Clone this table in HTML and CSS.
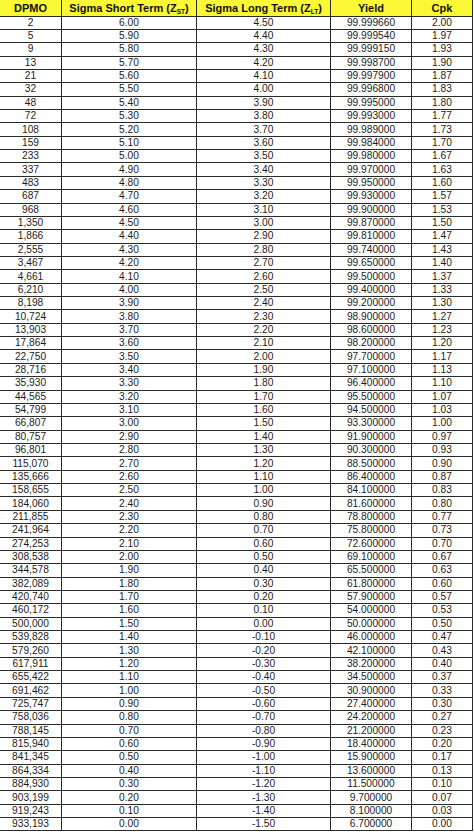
FILE: index.html
```html
<!DOCTYPE html>
<html>
<head>
<meta charset="utf-8">
<link rel="stylesheet" href="styles.css">
</head>
<body>
<table class="sigma">
<colgroup><col class="c1"><col class="c2"><col class="c3"><col class="c4"><col class="c5"></colgroup>
<thead>
<tr class="head"><th>DPMO</th><th>Sigma Short Term (Z<sub>ST</sub>)</th><th>Sigma Long Term (Z<sub>LT</sub>)</th><th>Yield</th><th>Cpk</th></tr>
</thead>
<tbody>
<tr><td>2</td><td>6.00</td><td>4.50</td><td>99.999660</td><td>2.00</td></tr>
<tr><td>5</td><td>5.90</td><td>4.40</td><td>99.999540</td><td>1.97</td></tr>
<tr><td>9</td><td>5.80</td><td>4.30</td><td>99.999150</td><td>1.93</td></tr>
<tr><td>13</td><td>5.70</td><td>4.20</td><td>99.998700</td><td>1.90</td></tr>
<tr><td>21</td><td>5.60</td><td>4.10</td><td>99.997900</td><td>1.87</td></tr>
<tr><td>32</td><td>5.50</td><td>4.00</td><td>99.996800</td><td>1.83</td></tr>
<tr><td>48</td><td>5.40</td><td>3.90</td><td>99.995000</td><td>1.80</td></tr>
<tr><td>72</td><td>5.30</td><td>3.80</td><td>99.993000</td><td>1.77</td></tr>
<tr><td>108</td><td>5.20</td><td>3.70</td><td>99.989000</td><td>1.73</td></tr>
<tr><td>159</td><td>5.10</td><td>3.60</td><td>99.984000</td><td>1.70</td></tr>
<tr><td>233</td><td>5.00</td><td>3.50</td><td>99.980000</td><td>1.67</td></tr>
<tr><td>337</td><td>4.90</td><td>3.40</td><td>99.970000</td><td>1.63</td></tr>
<tr><td>483</td><td>4.80</td><td>3.30</td><td>99.950000</td><td>1.60</td></tr>
<tr><td>687</td><td>4.70</td><td>3.20</td><td>99.930000</td><td>1.57</td></tr>
<tr><td>968</td><td>4.60</td><td>3.10</td><td>99.900000</td><td>1.53</td></tr>
<tr><td>1,350</td><td>4.50</td><td>3.00</td><td>99.870000</td><td>1.50</td></tr>
<tr><td>1,866</td><td>4.40</td><td>2.90</td><td>99.810000</td><td>1.47</td></tr>
<tr><td>2,555</td><td>4.30</td><td>2.80</td><td>99.740000</td><td>1.43</td></tr>
<tr><td>3,467</td><td>4.20</td><td>2.70</td><td>99.650000</td><td>1.40</td></tr>
<tr><td>4,661</td><td>4.10</td><td>2.60</td><td>99.500000</td><td>1.37</td></tr>
<tr><td>6,210</td><td>4.00</td><td>2.50</td><td>99.400000</td><td>1.33</td></tr>
<tr><td>8,198</td><td>3.90</td><td>2.40</td><td>99.200000</td><td>1.30</td></tr>
<tr><td>10,724</td><td>3.80</td><td>2.30</td><td>98.900000</td><td>1.27</td></tr>
<tr><td>13,903</td><td>3.70</td><td>2.20</td><td>98.600000</td><td>1.23</td></tr>
<tr><td>17,864</td><td>3.60</td><td>2.10</td><td>98.200000</td><td>1.20</td></tr>
<tr><td>22,750</td><td>3.50</td><td>2.00</td><td>97.700000</td><td>1.17</td></tr>
<tr><td>28,716</td><td>3.40</td><td>1.90</td><td>97.100000</td><td>1.13</td></tr>
<tr><td>35,930</td><td>3.30</td><td>1.80</td><td>96.400000</td><td>1.10</td></tr>
<tr><td>44,565</td><td>3.20</td><td>1.70</td><td>95.500000</td><td>1.07</td></tr>
<tr><td>54,799</td><td>3.10</td><td>1.60</td><td>94.500000</td><td>1.03</td></tr>
<tr><td>66,807</td><td>3.00</td><td>1.50</td><td>93.300000</td><td>1.00</td></tr>
<tr><td>80,757</td><td>2.90</td><td>1.40</td><td>91.900000</td><td>0.97</td></tr>
<tr><td>96,801</td><td>2.80</td><td>1.30</td><td>90.300000</td><td>0.93</td></tr>
<tr><td>115,070</td><td>2.70</td><td>1.20</td><td>88.500000</td><td>0.90</td></tr>
<tr><td>135,666</td><td>2.60</td><td>1.10</td><td>86.400000</td><td>0.87</td></tr>
<tr><td>158,655</td><td>2.50</td><td>1.00</td><td>84.100000</td><td>0.83</td></tr>
<tr><td>184,060</td><td>2.40</td><td>0.90</td><td>81.600000</td><td>0.80</td></tr>
<tr><td>211,855</td><td>2.30</td><td>0.80</td><td>78.800000</td><td>0.77</td></tr>
<tr><td>241,964</td><td>2.20</td><td>0.70</td><td>75.800000</td><td>0.73</td></tr>
<tr><td>274,253</td><td>2.10</td><td>0.60</td><td>72.600000</td><td>0.70</td></tr>
<tr><td>308,538</td><td>2.00</td><td>0.50</td><td>69.100000</td><td>0.67</td></tr>
<tr><td>344,578</td><td>1.90</td><td>0.40</td><td>65.500000</td><td>0.63</td></tr>
<tr><td>382,089</td><td>1.80</td><td>0.30</td><td>61.800000</td><td>0.60</td></tr>
<tr><td>420,740</td><td>1.70</td><td>0.20</td><td>57.900000</td><td>0.57</td></tr>
<tr><td>460,172</td><td>1.60</td><td>0.10</td><td>54.000000</td><td>0.53</td></tr>
<tr><td>500,000</td><td>1.50</td><td>0.00</td><td>50.000000</td><td>0.50</td></tr>
<tr><td>539,828</td><td>1.40</td><td>-0.10</td><td>46.000000</td><td>0.47</td></tr>
<tr><td>579,260</td><td>1.30</td><td>-0.20</td><td>42.100000</td><td>0.43</td></tr>
<tr><td>617,911</td><td>1.20</td><td>-0.30</td><td>38.200000</td><td>0.40</td></tr>
<tr><td>655,422</td><td>1.10</td><td>-0.40</td><td>34.500000</td><td>0.37</td></tr>
<tr><td>691,462</td><td>1.00</td><td>-0.50</td><td>30.900000</td><td>0.33</td></tr>
<tr><td>725,747</td><td>0.90</td><td>-0.60</td><td>27.400000</td><td>0.30</td></tr>
<tr><td>758,036</td><td>0.80</td><td>-0.70</td><td>24.200000</td><td>0.27</td></tr>
<tr><td>788,145</td><td>0.70</td><td>-0.80</td><td>21.200000</td><td>0.23</td></tr>
<tr><td>815,940</td><td>0.60</td><td>-0.90</td><td>18.400000</td><td>0.20</td></tr>
<tr><td>841,345</td><td>0.50</td><td>-1.00</td><td>15.900000</td><td>0.17</td></tr>
<tr><td>864,334</td><td>0.40</td><td>-1.10</td><td>13.600000</td><td>0.13</td></tr>
<tr><td>884,930</td><td>0.30</td><td>-1.20</td><td>11.500000</td><td>0.10</td></tr>
<tr><td>903,199</td><td>0.20</td><td>-1.30</td><td>9.700000</td><td>0.07</td></tr>
<tr><td>919,243</td><td>0.10</td><td>-1.40</td><td>8.100000</td><td>0.03</td></tr>
<tr><td>933,193</td><td>0.00</td><td>-1.50</td><td>6.700000</td><td>0.00</td></tr>
</tbody>
</table>
</body>
</html>
```
FILE: styles.css
```css
html, body {
  margin: 0;
  padding: 0;
  background: #ffffff;
}
.sigma {
  border-collapse: separate;
  border-spacing: 0;
  table-layout: fixed;
  width: 473px;
  font-family: "Liberation Sans", Arial, sans-serif;
  color: #1c1c1c;
}
.c1 { width: 62px; }
.c2 { width: 135px; }
.c3 { width: 134px; }
.c4 { width: 81px; }
.c5 { width: 61px; }
.sigma th, .sigma td {
  box-sizing: border-box;
  padding: 0;
  text-align: center;
  vertical-align: middle;
  border-right: 1px solid #2a2a2a;
  border-bottom: 1px solid #2a2a2a;
  white-space: nowrap;
  overflow: hidden;
}
.head th {
  background: #fbf835;
  height: 16.5px;
  font-size: 11px;
  font-weight: bold;
  line-height: 14px;
  color: #111;
}
.head sub {
  font-size: 6.5px;
  vertical-align: -2px;
  line-height: 0;
}
.sigma td {
  height: 13.37px;
  font-size: 10.2px;
  line-height: 12px;
}
```
